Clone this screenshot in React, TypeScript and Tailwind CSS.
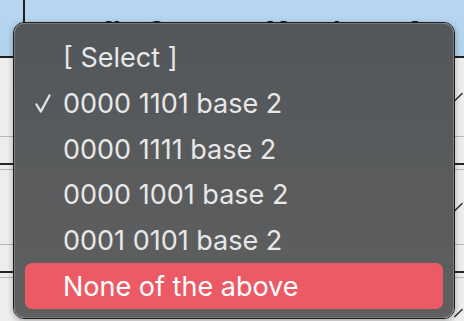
import React from 'react';

const options = [
  '[ Select ]',
  '0000 1101 base 2',
  '0000 1111 base 2',
  '0000 1001 base 2',
  '0001 0101 base 2',
  'None of the above',
];

const selectedIndex = 1;
const highlightedIndex = 5;

const Check = () => (
  <svg className="w-[16px] h-[19px]" viewBox="0 0 16 19" fill="none">
    <path d="M1.5 10.5L5.8 17.5L14.5 1.5" stroke="#e4e4e4" strokeWidth={2.3} strokeLinecap="round" strokeLinejoin="round" />
  </svg>
);

const TinyCheck = () => (
  <svg className="w-[10px] h-[10px]" viewBox="0 0 10 10" fill="none">
    <path d="M1 9L9 1" stroke="#2a2a2a" strokeWidth={1.6} strokeLinecap="round" />
  </svg>
);

export default function App() {
  return (
    <div className="relative w-[464px] h-[321px] overflow-hidden bg-[#eeeeee] font-['Inter',sans-serif]">
      {/* Question header behind the menu */}
      <div className="h-[58px] flex bg-gradient-to-b from-[#b7d6f0] to-[#b3d3ee] border-b-2 border-[#1e1e1e]">
        <div className="w-[25px] border-r-2 border-[#1e1e1e]" />
        <div className="flex-1 pl-[76px] pt-[18px] text-[28px] font-bold leading-none text-[#1a1a1a] whitespace-nowrap">
          1b. Convert 13 to base 2
        </div>
      </div>

      {/* Answer table rows behind the menu */}
      <div className="flex flex-col">
        <div className="h-[79px] flex border-b border-[#b9b9b9]">
          <div className="flex-1" />
          <div className="w-[10px] flex items-center justify-end pr-[1px]"><TinyCheck /></div>
        </div>
        <div className="h-[28px] border-b-2 border-[#262626]" />
        <div className="h-[5px] border-b border-[#b9b9b9]" />
        <div className="h-[75px] flex border-b border-[#b9b9b9]">
          <div className="flex-1" />
          <div className="w-[10px] flex items-center justify-end pr-[1px]"><TinyCheck /></div>
        </div>
        <div className="h-[28px] border-b-2 border-[#262626]" />
        <div className="h-[5px] border-b border-[#b9b9b9]" />
        <div className="h-[40px] flex">
          <div className="flex-1" />
          <div className="w-[10px] flex items-end justify-end pr-[1px]"><TinyCheck /></div>
        </div>
      </div>

      {/* Popup menu */}
      <div className="absolute left-[13px] top-[22px] w-[442px] h-[297px] rounded-[11px] border border-[#1c1c1c] shadow-[0_2px_6px_rgba(0,0,0,0.3)]">
        <div className="w-full h-full rounded-[10px] border border-[#7a7a7a] bg-gradient-to-b from-[#53575a] to-[#5f5f5f] px-[10px] pt-[11px] pb-[8px] flex flex-col">
          {options.map((label, i) => {
            const highlighted = i === highlightedIndex;
            return (
              <div
                key={label}
                className={
                  highlighted
                    ? 'h-[46px] flex items-center rounded-[7px] bg-[#ec5a66] text-white'
                    : 'h-[46px] flex items-center text-[#e8e8e8]'
                }
              >
                <div className="w-[38px] shrink-0 flex justify-end pr-[12px]">
                  {i === selectedIndex && <Check />}
                </div>
                <span className="text-[27px] leading-none">{label}</span>
              </div>
            );
          })}
        </div>
      </div>
    </div>
  );
}
